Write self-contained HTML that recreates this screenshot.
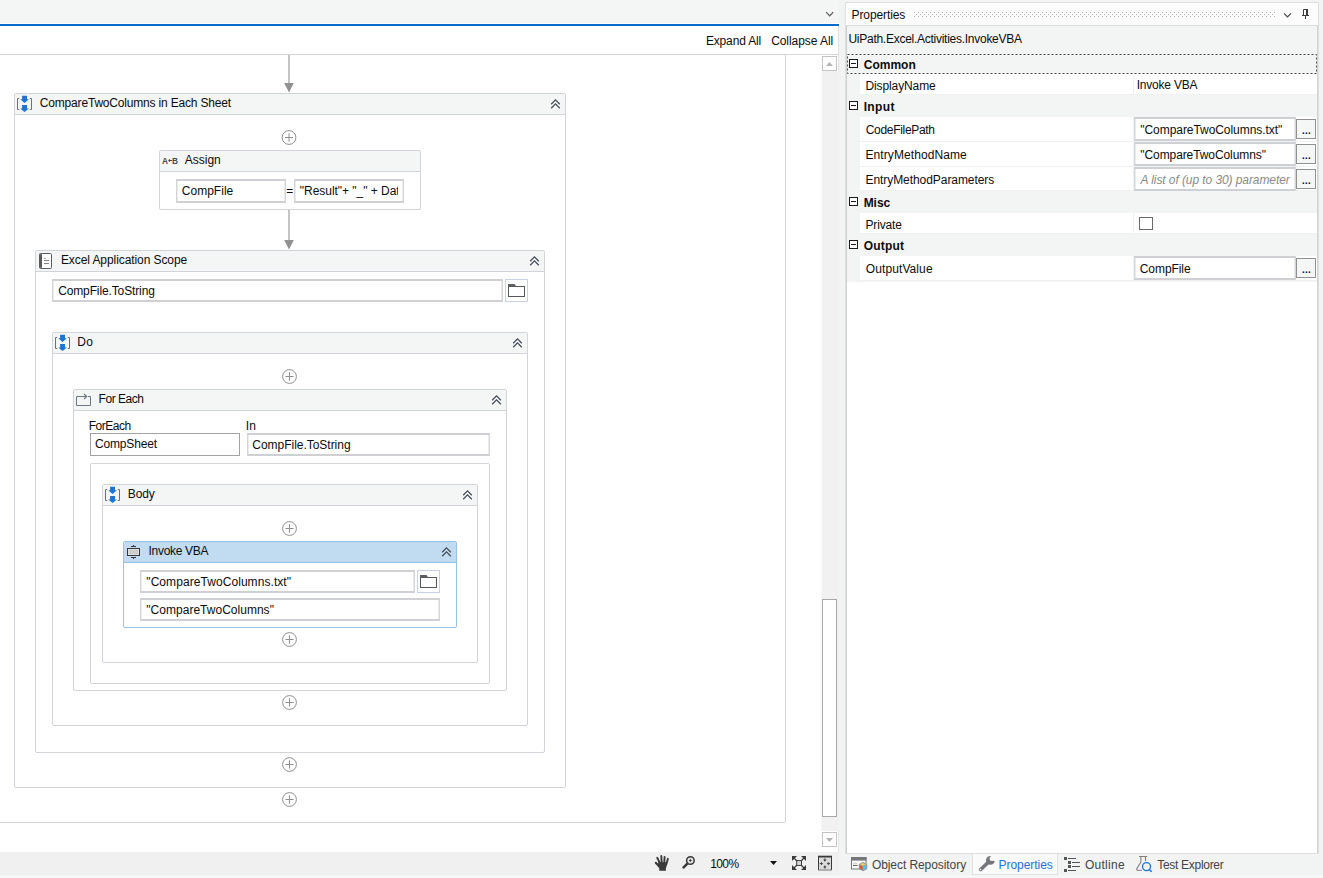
<!DOCTYPE html>
<html><head><meta charset="utf-8"><title>UiPath Studio</title><style>
html,body{margin:0;padding:0}
body{width:1323px;height:878px;overflow:hidden;background:#f2f3f3;position:relative;font-family:'Liberation Sans', sans-serif;font-size:12px;color:#111}
.abs{position:absolute}
.t{position:absolute;white-space:pre;line-height:14px;color:#0c0c0c}
.box{position:absolute;border:1px solid #d2d4d9;border-radius:2px;background:#fff}
.hdr{height:20px;border-bottom:1px solid #d2d4d9;border-radius:1px 1px 0 0}
.inp{position:absolute;border:1px solid #ced0d4;border-left-color:#d3d5d9;border-right-color:#d3d5d9;background:#fff;box-shadow:inset 0 1px 0 #ced0d4,inset 0 -1px 0 #ced0d4,inset 1px 0 0 #eaebed,inset -1px 0 0 #eaebed}
.inp2{position:absolute;border:1px solid #a3a3a3;background:#fff}
.fbtn{position:absolute;border:1px solid #c9d2e4;background:#fff}
.sbtn{background:#fff;border:1px solid #c4c4c4}
.dots{border:1px solid #919191;background:#f5f6f6;box-sizing:border-box}
</style></head><body>
<div class="abs" style="left:0px;top:0px;width:1323px;height:878px;background:#f2f3f3;"></div>
<div class="abs" style="left:0px;top:0px;width:839px;height:23px;background:#f4f6f6;"></div>
<div class="abs" style="left:0px;top:23px;width:839px;height:1px;background:#fbfcfc;"></div>
<div class="abs" style="left:0px;top:24px;width:839px;height:2px;background:#0b6bcf;"></div>
<div class="abs" style="left:0px;top:26px;width:839px;height:826px;background:#fff;"></div>
<div class="abs" style="left:838px;top:26px;width:1px;height:826px;background:#e3e3e3;"></div>
<div class="abs" style="left:0px;top:54px;width:839px;height:1px;background:#d5d6d9;"></div>
<svg class="abs" style="left:825px;top:11px" width="10" height="7" viewBox="0 0 10 7"><path d="M1.2 1.2L4.7 4.9L8.2 1.2" stroke="#555" stroke-width="1.2" fill="none"/></svg>
<span class="t" style="left:705.91px;top:33.84px;font-size:12px;letter-spacing:-0.157px;">Expand All</span>
<span class="t" style="left:771.14px;top:33.84px;font-size:12px;letter-spacing:-0.058px;">Collapse All</span>
<div class="abs" style="left:-3px;top:54px;width:789px;height:769px;border:1px solid #d4d5d9;border-radius:2px;box-sizing:border-box"></div>
<div class="abs" style="left:821px;top:71px;width:1px;height:760px;background:#f8f8f8;"></div>
<div class="abs" style="left:822px;top:71px;width:17px;height:760px;background:#f1f1f1;"></div>
<div class="abs sbtn" style="left:822px;top:56px;width:13px;height:13px"></div>
<svg class="abs" style="left:826px;top:62px" width="7" height="4" viewBox="0 0 7 4"><path d="M0 4h7L3.5 0z" fill="#b4b4b4"/></svg>
<div class="abs sbtn" style="left:822px;top:832px;width:13px;height:13px"></div>
<svg class="abs" style="left:826px;top:838px" width="7" height="4" viewBox="0 0 7 4"><path d="M0 0h7L3.5 4z" fill="#b4b4b4"/></svg>
<div class="abs" style="left:822px;top:599px;width:13px;height:216px;background:#fff;border:1px solid #a8a8a8"></div>
<div class="abs" style="left:288px;top:55px;width:2px;height:29px;background:#c4c4c4;"></div>
<svg class="abs" style="left:284px;top:83px" width="10" height="10" viewBox="0 0 10 10"><path d="M0.2 0h9.6L5 9.4z" fill="#919191"/></svg>
<div class="box" style="left:14px;top:93px;width:550px;height:693px;border-color:#d2d4d9"><div class="hdr" style="background:#f4f5f5;border-bottom-color:#d2d4d9"></div></div>
<svg class="abs" style="left:16px;top:95px" width="17" height="18" viewBox="0 0 17 18">
<path d="M3.2 3.5H1.5V14.5H3.2M13.8 3.5h1.7V14.5H13.8" stroke="#707070" stroke-width="1" fill="none"/>
<path d="M6.1 0.8h4.9v3.5h1.9L8.55 7.9L4.2 4.3h1.9z" fill="#1a75d6"/>
<path d="M6.1 10h4.9v3.5h1.9L8.55 17.1L4.2 13.5h1.9z" fill="#1a75d6"/></svg>
<span class="t" style="left:39.84px;top:95.84px;font-size:12px;letter-spacing:-0.184px;">CompareTwoColumns in Each Sheet</span>
<svg class="abs" style="left:550px;top:98px" width="11" height="12" viewBox="0 0 11 12"><path d="M1.2 6.2L5.5 1.8L9.8 6.2M1.2 10.3L5.5 5.9L9.8 10.3" stroke="#454c58" stroke-width="1.25" fill="none"/></svg>
<svg class="abs" style="left:280px;top:128px" width="19" height="19" viewBox="0 0 19 19"><circle cx="9.0" cy="9.5" r="6.9" fill="#fff" stroke="#8e8e8e" stroke-width="1"/><path d="M9.0 5.3v8.4M4.9 9.5h8.2" stroke="#8e8e8e" stroke-width="1" fill="none"/></svg>
<div class="box" style="left:159px;top:150px;width:260px;height:58px;border-color:#d2d4d9"><div class="hdr" style="background:#f4f5f5;border-bottom-color:#d2d4d9"></div></div>
<span class="t" style="left:184.68px;top:152.84px;font-size:12px;letter-spacing:0.009px;">Assign</span>
<span class="abs" style="left:162px;top:156px;font:bold 8.3px 'Liberation Sans',sans-serif;color:#4a4a4a;line-height:10px">A</span><span class="abs" style="left:172px;top:156px;font:bold 8.3px 'Liberation Sans',sans-serif;color:#4a4a4a;line-height:10px">B</span>
<svg class="abs" style="left:168px;top:158px" width="4" height="5" viewBox="0 0 4 5"><path d="M0 2.5L2 0.7V4.3zM2 2h2v1h-2z" fill="#4a4a4a"/></svg>
<div class="inp" style="left:176px;top:179px;width:108px;height:22px"></div>
<span class="t" style="left:181.84px;top:183.84px;font-size:12px;letter-spacing:0.008px;">CompFile</span>
<span class="t" style="left:286.17px;top:183.84px;font-size:12px;">=</span>
<div class="inp" style="left:294px;top:179px;width:108px;height:22px"></div>
<div class="abs" style="left:0;top:170px;width:398px;height:40px;overflow:hidden"><div class="abs" style="left:0;top:-170px"><span class="t" style="left:299.82px;top:183.84px;font-size:12px;letter-spacing:-0.033px;">&quot;Result&quot;+ &quot;_&quot; + Dat</span></div></div>
<div class="abs" style="left:288px;top:210px;width:2px;height:31px;background:#c4c4c4;"></div>
<svg class="abs" style="left:284px;top:240px" width="10" height="10" viewBox="0 0 10 10"><path d="M0.2 0h9.6L5 9.4z" fill="#919191"/></svg>
<div class="box" style="left:35px;top:250px;width:508px;height:501px;border-color:#d2d4d9"><div class="hdr" style="background:#f4f5f5;border-bottom-color:#d2d4d9"></div></div>
<svg class="abs" style="left:39px;top:253px" width="14" height="17" viewBox="0 0 14 17">
<rect x="0.5" y="0.5" width="12" height="15" rx="1.2" fill="#fff" stroke="#5c5c5c"/>
<path d="M0.5 1.2h2.5v13.6h-2.5z" fill="#5c5c5c"/>
<path d="M5 5.5h2" stroke="#b0b0b0" stroke-width="1"/><path d="M5 7.5h5M5 10.5h5" stroke="#858585" stroke-width="1"/></svg>
<span class="t" style="left:60.91px;top:252.84px;font-size:12px;letter-spacing:-0.081px;">Excel Application Scope</span>
<svg class="abs" style="left:529px;top:255px" width="11" height="12" viewBox="0 0 11 12"><path d="M1.2 6.2L5.5 1.8L9.8 6.2M1.2 10.3L5.5 5.9L9.8 10.3" stroke="#454c58" stroke-width="1.25" fill="none"/></svg>
<div class="inp" style="left:52px;top:279px;width:449px;height:21px"></div>
<span class="t" style="left:58.14px;top:283.84px;font-size:12px;letter-spacing:-0.122px;">CompFile.ToString</span>
<div class="fbtn" style="left:505px;top:279px;width:21px;height:21px"></div>
<svg class="abs" style="left:508px;top:283px" width="18" height="15" viewBox="0 0 18 15"><path d="M0 1.1h6.6l1.6 2.4h-8.2z" fill="#606060"/><rect x="0.5" y="3.5" width="16" height="10" fill="#fff" stroke="#585858" stroke-width="1"/></svg>
<div class="box" style="left:52px;top:332px;width:474px;height:392px;border-color:#d2d4d9"><div class="hdr" style="background:#f4f5f5;border-bottom-color:#d2d4d9"></div></div>
<svg class="abs" style="left:54px;top:334px" width="17" height="18" viewBox="0 0 17 18">
<path d="M3.2 3.5H1.5V14.5H3.2M13.8 3.5h1.7V14.5H13.8" stroke="#707070" stroke-width="1" fill="none"/>
<path d="M6.1 0.8h4.9v3.5h1.9L8.55 7.9L4.2 4.3h1.9z" fill="#1a75d6"/>
<path d="M6.1 10h4.9v3.5h1.9L8.55 17.1L4.2 13.5h1.9z" fill="#1a75d6"/></svg>
<span class="t" style="left:77.31px;top:334.84px;font-size:12px;letter-spacing:0.173px;">Do</span>
<svg class="abs" style="left:512px;top:337px" width="11" height="12" viewBox="0 0 11 12"><path d="M1.2 6.2L5.5 1.8L9.8 6.2M1.2 10.3L5.5 5.9L9.8 10.3" stroke="#454c58" stroke-width="1.25" fill="none"/></svg>
<svg class="abs" style="left:280px;top:367px" width="19" height="19" viewBox="0 0 19 19"><circle cx="9.5" cy="9.5" r="6.9" fill="#fff" stroke="#8e8e8e" stroke-width="1"/><path d="M9.5 5.3v8.4M5.4 9.5h8.2" stroke="#8e8e8e" stroke-width="1" fill="none"/></svg>
<div class="box" style="left:73px;top:389px;width:432px;height:300px;border-color:#d2d4d9"><div class="hdr" style="background:#f4f5f5;border-bottom-color:#d2d4d9"></div></div>
<svg class="abs" style="left:76px;top:393px" width="16" height="14" viewBox="0 0 16 14">
<path d="M10 3.5H0.5V12.5H14.5V3.5H12" stroke="#6b7882" stroke-width="1" fill="none"/>
<path d="M8 1L10.7 3.5L8 6" stroke="#6b7882" stroke-width="1.2" fill="none"/></svg>
<span class="t" style="left:98.61px;top:391.84px;font-size:12px;letter-spacing:-0.490px;">For Each</span>
<svg class="abs" style="left:491px;top:394px" width="11" height="12" viewBox="0 0 11 12"><path d="M1.2 6.2L5.5 1.8L9.8 6.2M1.2 10.3L5.5 5.9L9.8 10.3" stroke="#454c58" stroke-width="1.25" fill="none"/></svg>
<span class="t" style="left:88.71px;top:418.84px;font-size:12px;letter-spacing:-0.481px;">ForEach</span>
<span class="t" style="left:245.68px;top:418.84px;font-size:12px;letter-spacing:0.195px;">In</span>
<div class="inp2" style="left:90px;top:433px;width:148px;height:21px"></div>
<span class="t" style="left:95.04px;top:436.84px;font-size:12px;letter-spacing:-0.177px;">CompSheet</span>
<div class="inp" style="left:247px;top:433px;width:241px;height:21px"></div>
<span class="t" style="left:252.34px;top:437.84px;font-size:12px;letter-spacing:-0.028px;">CompFile.ToString</span>
<div class="box" style="left:90px;top:463px;width:398px;height:219px;border-color:#d2d4d9"></div>
<div class="box" style="left:102px;top:484px;width:374px;height:177px;border-color:#d2d4d9"><div class="hdr" style="background:#f4f5f5;border-bottom-color:#d2d4d9"></div></div>
<svg class="abs" style="left:104px;top:486px" width="17" height="18" viewBox="0 0 17 18">
<path d="M3.2 3.5H1.5V14.5H3.2M13.8 3.5h1.7V14.5H13.8" stroke="#707070" stroke-width="1" fill="none"/>
<path d="M6.1 0.8h4.9v3.5h1.9L8.55 7.9L4.2 4.3h1.9z" fill="#1a75d6"/>
<path d="M6.1 10h4.9v3.5h1.9L8.55 17.1L4.2 13.5h1.9z" fill="#1a75d6"/></svg>
<span class="t" style="left:127.81px;top:486.84px;font-size:12px;letter-spacing:-0.110px;">Body</span>
<svg class="abs" style="left:462px;top:489px" width="11" height="12" viewBox="0 0 11 12"><path d="M1.2 6.2L5.5 1.8L9.8 6.2M1.2 10.3L5.5 5.9L9.8 10.3" stroke="#454c58" stroke-width="1.25" fill="none"/></svg>
<svg class="abs" style="left:280px;top:519px" width="19" height="19" viewBox="0 0 19 19"><circle cx="9.5" cy="9.5" r="6.9" fill="#fff" stroke="#8e8e8e" stroke-width="1"/><path d="M9.5 5.3v8.4M5.4 9.5h8.2" stroke="#8e8e8e" stroke-width="1" fill="none"/></svg>
<div class="box" style="left:123px;top:541px;width:332px;height:85px;border-color:#96c2e8"><div class="hdr" style="background:#c1dcf1;border-bottom-color:#96c2e8"></div></div>
<svg class="abs" style="left:126px;top:544px" width="16" height="17" viewBox="0 0 16 17">
<rect x="1.5" y="4.5" width="12" height="7" fill="#cfcfcf" stroke="#383838"/>
<rect x="2.5" y="5.5" width="10" height="5" fill="none" stroke="#e4e4e4" stroke-width="0.7"/>
<path d="M5 2.5h5M7.5 1v1.5M5 13.5h5M7.5 13.5v1.5" stroke="#383838" stroke-width="1"/></svg>
<span class="t" style="left:148.57px;top:543.84px;font-size:12px;letter-spacing:-0.307px;">Invoke VBA</span>
<svg class="abs" style="left:441px;top:546px" width="11" height="12" viewBox="0 0 11 12"><path d="M1.2 6.2L5.5 1.8L9.8 6.2M1.2 10.3L5.5 5.9L9.8 10.3" stroke="#454c58" stroke-width="1.25" fill="none"/></svg>
<div class="inp" style="left:140px;top:570px;width:273px;height:21px"></div>
<span class="t" style="left:146.32px;top:574.84px;font-size:12px;letter-spacing:0.067px;">&quot;CompareTwoColumns.txt&quot;</span>
<div class="fbtn" style="left:417px;top:570px;width:21px;height:21px"></div>
<svg class="abs" style="left:420px;top:574px" width="18" height="15" viewBox="0 0 18 15"><path d="M0 1.1h6.6l1.6 2.4h-8.2z" fill="#606060"/><rect x="0.5" y="3.5" width="16" height="10" fill="#fff" stroke="#585858" stroke-width="1"/></svg>
<div class="inp" style="left:140px;top:598px;width:298px;height:21px"></div>
<span class="t" style="left:146.32px;top:602.84px;font-size:12px;letter-spacing:0.020px;">&quot;CompareTwoColumns&quot;</span>
<svg class="abs" style="left:280px;top:630px" width="19" height="19" viewBox="0 0 19 19"><circle cx="9.5" cy="9.5" r="6.9" fill="#fff" stroke="#8e8e8e" stroke-width="1"/><path d="M9.5 5.3v8.4M5.4 9.5h8.2" stroke="#8e8e8e" stroke-width="1" fill="none"/></svg>
<svg class="abs" style="left:280px;top:693px" width="19" height="19" viewBox="0 0 19 19"><circle cx="9.5" cy="9.5" r="6.9" fill="#fff" stroke="#8e8e8e" stroke-width="1"/><path d="M9.5 5.3v8.4M5.4 9.5h8.2" stroke="#8e8e8e" stroke-width="1" fill="none"/></svg>
<svg class="abs" style="left:280px;top:755px" width="19" height="19" viewBox="0 0 19 19"><circle cx="9.5" cy="9.5" r="6.9" fill="#fff" stroke="#8e8e8e" stroke-width="1"/><path d="M9.5 5.3v8.4M5.4 9.5h8.2" stroke="#8e8e8e" stroke-width="1" fill="none"/></svg>
<svg class="abs" style="left:280px;top:790px" width="19" height="19" viewBox="0 0 19 19"><circle cx="9.5" cy="9.5" r="6.9" fill="#fff" stroke="#8e8e8e" stroke-width="1"/><path d="M9.5 5.3v8.4M5.4 9.5h8.2" stroke="#8e8e8e" stroke-width="1" fill="none"/></svg>
<div class="abs" style="left:0px;top:852px;width:839px;height:23px;background:#f0f0f0;"></div>
<div class="abs" style="left:0px;top:875px;width:1323px;height:3px;background:#f5f6f6;"></div>
<span class="t" style="left:710.15px;top:856.84px;font-size:12px;letter-spacing:-0.588px;">100%</span>
<svg class="abs" style="left:770px;top:861px" width="7" height="4" viewBox="0 0 7 4"><path d="M0 0h7L3.5 4z" fill="#111"/></svg>
<svg class="abs" style="left:654px;top:854px" width="16" height="18" viewBox="0 0 16 18"><g stroke="#3a3a3a" stroke-linecap="round" fill="none">
<path d="M3.2 3.8L5.9 9" stroke-width="1.9"/><path d="M7.3 2L7.7 8.5" stroke-width="1.9"/><path d="M10.6 2.9L10.3 8.5" stroke-width="1.9"/><path d="M13.9 4.8L12.3 10.5" stroke-width="1.9"/><path d="M1.8 8.8L5.5 12.8" stroke-width="2.1"/></g>
<path d="M4.6 8L13.2 8.2L12.6 12L11.9 14.6V16.8H5.3V14.6L3.6 11z" fill="#3a3a3a"/></svg>
<svg class="abs" style="left:681px;top:855px" width="15" height="15" viewBox="0 0 15 15"><path d="M6.6 8.4L1.9 13.1" stroke="#3a3a3a" stroke-width="2.5" fill="none"/>
<circle cx="9.4" cy="5.5" r="3.8" fill="#e2e2e2" stroke="#3a3a3a" stroke-width="1.5"/><path d="M9.4 4.2v2.6M8.1 5.5h2.6" stroke="#3a3a3a" stroke-width="1"/></svg>
<svg class="abs" style="left:791px;top:855px" width="16" height="16" viewBox="0 0 16 16"><g fill="#3a3a3a">
<path d="M1 1h5L1 6z"/><path d="M15 1h-5l5 5z"/><path d="M1 15h5L1 10z"/><path d="M15 15h-5l5 -5z"/></g>
<path d="M2.5 2.5L6 6M13.5 2.5L10 6M2.5 13.5L6 10M13.5 13.5L10 10" stroke="#3a3a3a" stroke-width="1.2"/>
<rect x="5.7" y="5.6" width="4.8" height="4.8" fill="#dadada" stroke="#3a3a3a" stroke-width="1"/></svg>
<svg class="abs" style="left:817px;top:855px" width="16" height="16" viewBox="0 0 16 16"><rect x="1" y="1" width="14" height="14.5" fill="#dbdbdb"/>
<rect x="1" y="0.7" width="14" height="1.8" fill="#3a3a3a"/><rect x="1" y="1" width="1" height="14" fill="#3a3a3a"/><rect x="14" y="1" width="1" height="14" fill="#3a3a3a"/><rect x="1" y="14.5" width="14" height="1" fill="#808080"/>
<g fill="#3a3a3a"><path d="M6.3 4.6h3.2L7.9 6.8z"/><rect x="7.4" y="3.4" width="1" height="1.4"/><path d="M6.3 12.4h3.2L7.9 10.2z"/><rect x="7.4" y="12.2" width="1" height="1.4"/><path d="M4 7v3.2L6 8.6z"/><rect x="2.8" y="8.1" width="1.4" height="1"/><path d="M11.8 7v3.2L9.8 8.6z"/><rect x="11.6" y="8.1" width="1.4" height="1"/></g></svg>
<div class="abs" style="left:845px;top:2px;width:474px;height:852px;background:#fff;border:1px solid #dfdfdf;box-sizing:border-box"></div>
<div class="abs" style="left:846px;top:3px;width:472px;height:22px;background:#fcfcfc;"></div>
<div class="abs" style="left:846px;top:25px;width:472px;height:1px;background:#dcdcdc;"></div>
<div class="abs" style="left:846px;top:26px;width:1px;height:827px;background:#cfcfcf;"></div>
<div class="abs" style="left:1317px;top:26px;width:1px;height:827px;background:#d4d4d4;"></div>
<div class="abs" style="left:847px;top:26px;width:470px;height:256px;background:#f3f5f5;"></div>
<span class="t" style="left:851.51px;top:7.84px;font-size:12px;letter-spacing:-0.096px;">Properties</span>
<svg class="abs" style="left:914px;top:12px" width="361" height="5" viewBox="0 0 361 5"><defs><pattern id="gp" width="4" height="4" patternUnits="userSpaceOnUse"><rect x="0" y="0" width="1" height="1" fill="#b4b4b4"/><rect x="2" y="2" width="1" height="1" fill="#b4b4b4"/></pattern></defs><rect width="361" height="5" fill="url(#gp)"/></svg>
<svg class="abs" style="left:1283px;top:12px" width="10" height="6" viewBox="0 0 10 6"><path d="M1 1.3L4.5 4.8L8 1.3" stroke="#444" stroke-width="1.2" fill="none"/></svg>
<svg class="abs" style="left:1302px;top:9px" width="8" height="10" viewBox="0 0 8 10"><path d="M1.5 6V0.5H5.5V6" stroke="#3c3c3c" stroke-width="1" fill="none"/><rect x="4" y="0" width="2" height="6" fill="#3c3c3c"/><rect x="0" y="6" width="7" height="1" fill="#3c3c3c"/><rect x="3" y="7" width="1" height="3" fill="#3c3c3c"/></svg>
<span class="t" style="left:848.45px;top:31.84px;font-size:12px;letter-spacing:-0.266px;">UiPath.Excel.Activities.InvokeVBA</span>
<svg class="abs" style="left:849px;top:59px" width="9" height="9" viewBox="0 0 9 9"><rect x="0.5" y="0.5" width="8" height="8" fill="#fff" stroke="#1a1a1a"/><path d="M2 4.5h5" stroke="#1a1a1a"/></svg>
<span class="t" style="left:863.86px;top:57.84px;font-size:12px;letter-spacing:-0.021px;font-weight:bold">Common</span>
<div class="abs" style="left:860px;top:74px;width:457px;height:21px;background:#fff;"></div>
<div class="abs" style="left:1133px;top:74px;width:1px;height:21px;background:#f0f1f1;"></div>
<div class="abs" style="left:860px;top:94px;width:457px;height:1px;background:#f0f1f1;"></div>
<span class="t" style="left:865.51px;top:78.84px;font-size:12px;letter-spacing:-0.112px;">DisplayName</span>
<span class="t" style="left:1136.67px;top:77.84px;font-size:12px;letter-spacing:-0.207px;">Invoke VBA</span>
<svg class="abs" style="left:849px;top:101px" width="9" height="9" viewBox="0 0 9 9"><rect x="0.5" y="0.5" width="8" height="8" fill="#fff" stroke="#1a1a1a"/><path d="M2 4.5h5" stroke="#1a1a1a"/></svg>
<span class="t" style="left:863.63px;top:99.84px;font-size:12px;letter-spacing:0.390px;font-weight:bold">Input</span>
<div class="abs" style="left:860px;top:117px;width:457px;height:25px;background:#fff;"></div>
<div class="abs" style="left:1133px;top:117px;width:1px;height:25px;background:#f0f1f1;"></div>
<div class="abs" style="left:860px;top:141px;width:457px;height:1px;background:#f0f1f1;"></div>
<span class="t" style="left:865.74px;top:122.84px;font-size:12px;letter-spacing:-0.314px;">CodeFilePath</span>
<div class="inp" style="left:1134px;top:117px;width:160px;height:22px"></div>
<span class="t" style="left:1140.32px;top:122.84px;font-size:12px;letter-spacing:-0.061px;">&quot;CompareTwoColumns.txt&quot;</span>
<div class="abs dots" style="left:1296px;top:119px;width:20px;height:20px"></div>
<span class="t" style="left:1301.13px;top:121.80px;font-size:15px;letter-spacing:-1.120px;color:#111">...</span>
<div class="abs" style="left:860px;top:142px;width:457px;height:25px;background:#fff;"></div>
<div class="abs" style="left:1133px;top:142px;width:1px;height:25px;background:#f0f1f1;"></div>
<div class="abs" style="left:860px;top:166px;width:457px;height:1px;background:#f0f1f1;"></div>
<span class="t" style="left:865.51px;top:147.84px;font-size:12px;letter-spacing:0.089px;">EntryMethodName</span>
<div class="inp" style="left:1134px;top:142px;width:160px;height:22px"></div>
<span class="t" style="left:1140.32px;top:147.84px;font-size:12px;letter-spacing:-0.091px;">&quot;CompareTwoColumns&quot;</span>
<div class="abs dots" style="left:1296px;top:144px;width:20px;height:20px"></div>
<span class="t" style="left:1301.13px;top:146.80px;font-size:15px;letter-spacing:-1.120px;color:#111">...</span>
<div class="abs" style="left:860px;top:167px;width:457px;height:24px;background:#fff;"></div>
<div class="abs" style="left:1133px;top:167px;width:1px;height:24px;background:#f0f1f1;"></div>
<div class="abs" style="left:860px;top:190px;width:457px;height:1px;background:#f0f1f1;"></div>
<span class="t" style="left:865.51px;top:172.84px;font-size:12px;letter-spacing:-0.064px;">EntryMethodParameters</span>
<div class="inp" style="left:1134px;top:167px;width:160px;height:22px"></div>
<span class="t" style="left:1140.54px;top:172.84px;font-size:12px;letter-spacing:-0.081px;font-style:italic;color:#8a8a8a">A list of (up to 30) parameter</span>
<div class="abs dots" style="left:1296px;top:169px;width:20px;height:20px"></div>
<span class="t" style="left:1301.13px;top:171.80px;font-size:15px;letter-spacing:-1.120px;color:#111">...</span>
<svg class="abs" style="left:849px;top:197px" width="9" height="9" viewBox="0 0 9 9"><rect x="0.5" y="0.5" width="8" height="8" fill="#fff" stroke="#1a1a1a"/><path d="M2 4.5h5" stroke="#1a1a1a"/></svg>
<span class="t" style="left:863.63px;top:195.84px;font-size:12px;letter-spacing:-0.007px;font-weight:bold">Misc</span>
<div class="abs" style="left:860px;top:213px;width:457px;height:21px;background:#fff;"></div>
<div class="abs" style="left:1133px;top:213px;width:1px;height:21px;background:#f0f1f1;"></div>
<div class="abs" style="left:860px;top:233px;width:457px;height:1px;background:#f0f1f1;"></div>
<span class="t" style="left:865.51px;top:217.84px;font-size:12px;letter-spacing:-0.169px;">Private</span>
<div class="abs" style="left:1139px;top:217px;width:12px;height:11px;border:1px solid #6a6a6a;background:#fff"></div>
<svg class="abs" style="left:849px;top:240px" width="9" height="9" viewBox="0 0 9 9"><rect x="0.5" y="0.5" width="8" height="8" fill="#fff" stroke="#1a1a1a"/><path d="M2 4.5h5" stroke="#1a1a1a"/></svg>
<span class="t" style="left:863.86px;top:238.84px;font-size:12px;letter-spacing:0.166px;font-weight:bold">Output</span>
<div class="abs" style="left:860px;top:256px;width:457px;height:25px;background:#fff;"></div>
<div class="abs" style="left:1133px;top:256px;width:1px;height:25px;background:#f0f1f1;"></div>
<div class="abs" style="left:860px;top:280px;width:457px;height:1px;background:#f0f1f1;"></div>
<span class="t" style="left:865.79px;top:261.84px;font-size:12px;letter-spacing:0.096px;">OutputValue</span>
<div class="inp" style="left:1134px;top:256px;width:160px;height:22px"></div>
<span class="t" style="left:1139.74px;top:261.84px;font-size:12px;letter-spacing:-0.063px;">CompFile</span>
<div class="abs dots" style="left:1296px;top:258px;width:20px;height:20px"></div>
<span class="t" style="left:1301.13px;top:260.80px;font-size:15px;letter-spacing:-1.120px;color:#111">...</span>
<svg class="abs" style="left:847px;top:54px" width="470" height="20" viewBox="0 0 470 20"><rect x="0.5" y="0.5" width="469" height="19" fill="none" stroke="#4a4a4a" stroke-width="1" stroke-dasharray="2 2"/></svg>
<div class="abs" style="left:972px;top:854px;width:84px;height:20px;background:#fafafa;border:1px solid #e1e3e5;border-top:none"></div>
<span class="t" style="left:871.90px;top:857.84px;font-size:12px;letter-spacing:-0.070px;color:#444">Object Repository</span>
<span class="t" style="left:998.58px;top:857.84px;font-size:12px;letter-spacing:-0.056px;color:#1b74da">Properties</span>
<span class="t" style="left:1084.90px;top:857.84px;font-size:12px;letter-spacing:0.275px;color:#444">Outline</span>
<span class="t" style="left:1157.21px;top:857.84px;font-size:12px;letter-spacing:-0.291px;color:#444">Test Explorer</span>
<svg class="abs" style="left:851px;top:857px" width="17" height="15" viewBox="0 0 17 15"><rect x="0.5" y="0.5" width="14.5" height="11.5" fill="#fff" stroke="#75777b"/><rect x="0" y="0" width="15.5" height="3.6" fill="#75777b"/>
<path d="M2 6.3h4.5" stroke="#c8c8c8"/><path d="M2 8.4h4.5" stroke="#555"/>
<path d="M8.2 7.3L12 5.4L15.8 7.3V11.6L12 13.8L8.2 11.6z" fill="#fff" stroke="#8a9098" stroke-width="0.8"/>
<path d="M8.4 7.4L12 5.6L15.6 7.4L12 9z" fill="#f5d54a" stroke="#8a9098" stroke-width="0.6"/><path d="M8.5 7.8L11.8 9.3V13.4L8.5 11.4z" fill="#f4511e" stroke="#8a9098" stroke-width="0.6"/><path d="M15.5 7.8L12.2 9.3V13.4L15.5 11.4z" fill="#4fc3f7" stroke="#8a9098" stroke-width="0.6"/></svg>
<svg class="abs" style="left:978px;top:855px" width="18" height="18" viewBox="0 0 18 18"><path d="M2.7 14.5L10.6 7" stroke="#75777b" stroke-width="3.7" stroke-linecap="round" fill="none"/>
<circle cx="12.4" cy="5.4" r="4.4" fill="#75777b"/><circle cx="14.1" cy="3.6" r="2.5" fill="#fafafa"/><path d="M12.6 0.2L18 -1V7L15.9 5.8z" fill="#fafafa"/><circle cx="2.6" cy="14.6" r="0.8" fill="#fafafa"/></svg>
<svg class="abs" style="left:1064px;top:857px" width="17" height="15" viewBox="0 0 17 15"><g fill="#555"><rect x="0" y="0" width="3" height="3"/><rect x="4" y="1" width="8" height="1"/>
<rect x="4" y="4" width="3" height="3"/><rect x="8" y="5" width="8" height="1"/><rect x="4" y="8" width="3" height="3"/><rect x="8" y="9" width="8" height="1"/>
<rect x="0" y="12" width="3" height="3"/><rect x="4" y="13" width="8" height="1"/></g></svg>
<svg class="abs" style="left:1135px;top:855px" width="18" height="18" viewBox="0 0 18 18"><path d="M4 1.5h8.2M5.9 1.5V7L1.9 13.5Q1.3 15.3 3 15.3H7M10.5 1.5V6" stroke="#808080" stroke-width="1.1" fill="none"/>
<circle cx="11.5" cy="11.6" r="4" fill="none" stroke="#1a75d6" stroke-width="1.3"/><path d="M14.4 14.6L16.7 16.8" stroke="#1a75d6" stroke-width="1.5"/></svg>
</body></html>
